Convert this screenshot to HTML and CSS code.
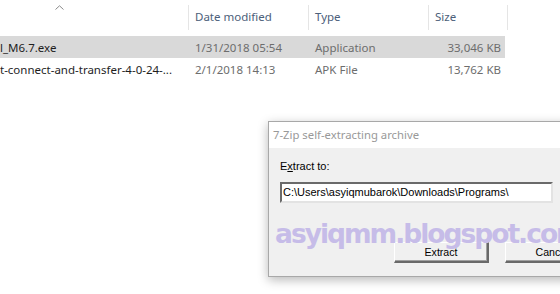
FILE: index.html
```html
<!DOCTYPE html>
<html>
<head>
<meta charset="utf-8">
<link rel="stylesheet" href="styles.css">
</head>
<body>
<div class="explorer">
  <div class="hdr">
    <div class="hcell name"><svg class="chev" width="9" height="5" viewBox="0 0 9 5"><path d="M0.5 4.5 L4.5 0.8 L8.5 4.5" fill="none" stroke="#8a8a8a" stroke-width="1"/></svg></div>
    <div class="hcell sep">Date modified</div>
    <div class="hcell sep">Type</div>
    <div class="hcell sep last">Size</div>
  </div>
  <div class="row sel">
    <div class="cell fname">l_M6.7.exe</div>
    <div class="cell meta">1/31/2018 05:54</div>
    <div class="cell meta">Application</div>
    <div class="cell meta size">33,046 KB</div>
  </div>
  <div class="row">
    <div class="cell fname">t-connect-and-transfer-4-0-24-...</div>
    <div class="cell meta">2/1/2018 14:13</div>
    <div class="cell meta">APK File</div>
    <div class="cell meta size">13,762 KB</div>
  </div>
</div>

<div class="dialog">
  <div class="titlebar">7-Zip self-extracting archive</div>
  <div class="dbody">
    <div class="label">E<u>x</u>tract to:</div>
    <div class="input">C:\Users\asyiqmubarok\Downloads\Programs\</div>
    <div class="buttons">
      <div class="btn">Extract</div>
      <div class="btn">Cancel</div>
    </div>
  </div>
</div>

<div class="watermark">asyiqmm.blogspot.com</div>
</body>
</html>
```

FILE: styles.css
```css
html, body {
  margin: 0;
  padding: 0;
}
body {
  width: 560px;
  height: 294px;
  overflow: hidden;
  background: #ffffff;
  position: relative;
  font-family: "Noto Sans", "Open Sans", sans-serif;
}
.explorer {
  display: flex;
  flex-direction: column;
}
.hdr {
  display: grid;
  grid-template-columns: 188px 120px 120px 80px;
  height: 36px;
}
.hcell {
  position: relative;
  font-size: 11.5px;
  color: #4c607a;
  padding: 9px 0 0 7px;
  box-sizing: border-box;
}
.hcell.name {
  padding: 5px 0 0 55px;
}
.hcell.sep::before {
  content: "";
  position: absolute;
  left: 0;
  top: 5px;
  height: 25px;
  border-left: 1px solid #e5e5e5;
}
.hcell.last::after {
  content: "";
  position: absolute;
  right: 0;
  top: 5px;
  height: 25px;
  border-left: 1px solid #e5e5e5;
}
.chev {
  display: block;
}
.row {
  display: grid;
  grid-template-columns: 188px 120px 120px 77px;
  height: 22px;
  align-items: center;
  width: 505px;
}
.row.sel {
  background: #d9d9d9;
}
.cell {
  font-size: 11.5px;
  white-space: nowrap;
  overflow: hidden;
}
.fname {
  color: #1e1e1e;
}
.meta {
  color: #6d6d6d;
  padding-left: 7px;
}
.meta.size {
  text-align: right;
  padding-right: 4px;
}

.dialog {
  position: absolute;
  left: 268px;
  top: 121px;
  width: 320px;
  height: 154px;
  border: 1px solid #a8a8a8;
  box-shadow: 0 3px 10px rgba(0, 0, 0, 0.28);
  background: #f0f0f0;
  display: flex;
  flex-direction: column;
}
.titlebar {
  height: 26px;
  background: #ffffff;
  color: #999999;
  font-size: 11.3px;
  line-height: 26px;
  padding-left: 4px;
}
.dbody {
  flex: 1;
  padding: 10px 0 0 11px;
  font-family: "Liberation Sans", Arial, sans-serif;
  display: flex;
  flex-direction: column;
}
.label {
  font-size: 11px;
  color: #000;
  height: 16px;
  line-height: 16px;
}
.input {
  margin-top: 8px;
  width: 268px;
  height: 17px;
  background: #fff;
  border-top: 2px solid #6a6a6a;
  border-left: 2px solid #6a6a6a;
  border-right: 2px solid #e3e3e3;
  border-bottom: 2px solid #e3e3e3;
  font-size: 11px;
  line-height: 17px;
  padding-left: 1px;
  color: #000;
  white-space: nowrap;
}
.buttons {
  display: flex;
  gap: 16px;
  margin: 39px 0 0 114px;
}
.btn {
  width: 92px;
  height: 18px;
  background: #f0f0f0;
  border-top: 1px solid #ffffff;
  border-left: 1px solid #ffffff;
  border-right: 2px solid #696969;
  border-bottom: 2px solid #696969;
  box-shadow: inset -1px -1px 0 #a0a0a0;
  font-size: 10.6px;
  line-height: 18px;
  text-align: center;
  color: #000;
  flex: none;
}

.watermark {
  position: absolute;
  left: 275px;
  top: 218px;
  font-family: "DejaVu Sans", sans-serif;
  font-weight: bold;
  font-size: 26.5px;
  color: #c6bce8;
  white-space: nowrap;
  letter-spacing: -2px;
}
```
